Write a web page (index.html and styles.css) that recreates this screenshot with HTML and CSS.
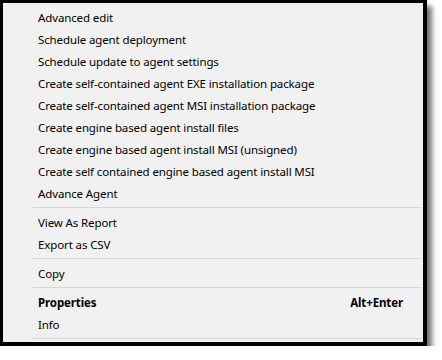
FILE: index.html
```html
<!DOCTYPE html>
<html>
<head>
<meta charset="utf-8">
<link rel="stylesheet" href="styles.css">
</head>
<body>
<div class="menu">
  <div class="item">Advanced edit</div>
  <div class="item">Schedule agent deployment</div>
  <div class="item">Schedule update to agent settings</div>
  <div class="item">Create self-contained agent EXE installation package</div>
  <div class="item">Create self-contained agent MSI installation package</div>
  <div class="item">Create engine based agent install files</div>
  <div class="item">Create engine based agent install MSI (unsigned)</div>
  <div class="item">Create self contained engine based agent install MSI</div>
  <div class="item">Advance Agent</div>
  <div class="sep"></div>
  <div class="item">View As Report</div>
  <div class="item">Export as CSV</div>
  <div class="sep"></div>
  <div class="item">Copy</div>
  <div class="sep"></div>
  <div class="item bold"><span>Properties</span><span class="key">Alt+Enter</span></div>
  <div class="item">Info</div>
  <div class="sep"></div>
</div>
</body>
</html>
```
FILE: styles.css
```css
html, body {
  margin: 0;
  padding: 0;
  background: #ffffff;
}
.menu {
  width: 420px;
  box-sizing: content-box;
  background: #f1f1f1;
  border-style: solid;
  border-color: #000;
  border-width: 3px 4px 4px 3px;
  padding-top: 3px;
  box-shadow: 5px 6px 5px rgba(0, 0, 0, 0.55);
  font-family: "Noto Sans", "Open Sans", sans-serif;
  font-size: 11.5px;
  letter-spacing: -0.12px;
  color: #000;
}
.item {
  height: 22px;
  display: flex;
  align-items: center;
  justify-content: space-between;
  padding-left: 35px;
  padding-right: 20px;
  white-space: nowrap;
}
.bold {
  font-weight: bold;
}
.sep {
  height: 1px;
  background: #d5d5d5;
  margin: 3px 2px 3px 30px;
}
```
